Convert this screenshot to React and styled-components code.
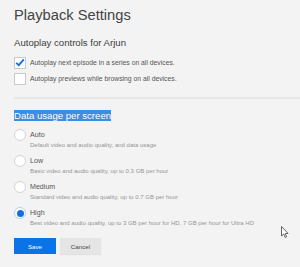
import React from "react";
import styled, { createGlobalStyle } from "styled-components";

const Global = createGlobalStyle`
  html, body { margin: 0; padding: 0; background: #f3f3f3; }
  body { font-family: "Liberation Sans", Arial, sans-serif; }
`;

const Page = styled.div`
  position: relative;
  width: 300px;
  height: 267px;
  background: #f3f3f3;
  padding-top: 7px;
  box-sizing: border-box;
  overflow: hidden;
`;

const Section = styled.section`
  padding-left: 14px;
  display: flex;
  flex-direction: column;
`;

const Title = styled.h1`
  margin: 0;
  font-size: 14.7px;
  line-height: 17px;
  font-weight: 400;
  color: #444;
`;

const SubTitle = styled.h2`
  margin: ${(p) => p.$mt}px 0 0;
  font-size: 9.6px;
  line-height: 12px;
  font-weight: 400;
  color: #3c3c3c;
`;

const CheckList = styled.div`
  margin-top: 5.5px;
  display: flex;
  flex-direction: column;
`;

const CheckRow = styled.label`
  display: flex;
  align-items: center;
  gap: 4px;
  height: 16px;
`;

const Box = styled.span`
  width: 12px;
  height: 12px;
  box-sizing: border-box;
  border: 1px solid #cacaca;
  background: #fff;
  display: flex;
  align-items: center;
  justify-content: center;
  flex-shrink: 0;
`;

const SmallLabel = styled.span`
  font-size: 6.8px;
  line-height: 8px;
  color: #555;
  white-space: nowrap;
`;

const Divider = styled.hr`
  margin: 10.5px 0 0 14px;
  border: 0;
  height: 2px;
  background: #e7e7e7;
`;

const Heading = styled.div`
  margin-top: 11px;
  font-size: 9.6px;
  line-height: 11px;
  height: 11px;
`;

const Selected = styled.span`
  background: #3a8ee6;
  color: #fff;
`;

const RadioList = styled.div`
  margin-top: 8px;
  display: flex;
  flex-direction: column;
  gap: 6px;
`;

const RadioGroup = styled.div`
  display: grid;
  grid-template-columns: 12px auto;
  column-gap: 4px;
  row-gap: 0;
  align-items: center;
`;

const Circle = styled.span`
  width: 12px;
  height: 12px;
  box-sizing: border-box;
  border-radius: 50%;
  border: 1px solid ${(p) => (p.$on ? "#b5d0ee" : "#d4d4d4")};
  background: #fff;
  display: flex;
  align-items: center;
  justify-content: center;
  &::after {
    content: "";
    display: ${(p) => (p.$on ? "block" : "none")};
    width: 7px;
    height: 7px;
    border-radius: 50%;
    background: #0f6fe0;
  }
`;

const RadioLabel = styled.span`
  font-size: 7.1px;
  line-height: 10px;
  color: #555;
`;

const Desc = styled.span`
  grid-column: 2;
  font-size: 6px;
  line-height: 8px;
  color: #959595;
  white-space: nowrap;
`;

const Buttons = styled.div`
  margin-top: 11px;
  display: flex;
  gap: 4px;
`;

const Button = styled.button`
  height: 16px;
  width: ${(p) => p.$w}px;
  border: 0;
  padding: 0;
  font-family: inherit;
  font-size: 6.2px;
  background: ${(p) => (p.$primary ? "#0a74e6" : "#e5e5e5")};
  color: ${(p) => (p.$primary ? "#fff" : "#444")};
  box-shadow: ${(p) => (p.$primary ? "none" : "0 1px 1px rgba(0,0,0,0.07)")};
`;

const Cursor = styled.svg`
  position: absolute;
  left: 281px;
  top: 226px;
`;

const checks = [
  { label: "Autoplay next episode in a series on all devices.", on: true },
  { label: "Autoplay previews while browsing on all devices.", on: false },
];

const options = [
  { label: "Auto", desc: "Default video and audio quality, and data usage" },
  { label: "Low", desc: "Basic video and audio quality, up to 0.3 GB per hour" },
  { label: "Medium", desc: "Standard video and audio quality, up to 0.7 GB per hour" },
  {
    label: "High",
    desc: "Best video and audio quality, up to 3 GB per hour for HD, 7 GB per hour for Ultra HD",
    on: true,
  },
];

export default function App() {
  return (
    <Page>
      <Global />
      <Section>
        <Title>Playback Settings</Title>
        <SubTitle $mt={13}>Autoplay controls for Arjun</SubTitle>
        <CheckList>
          {checks.map((c) => (
            <CheckRow key={c.label}>
              <Box>
                {c.on && (
                  <svg width="10" height="9" viewBox="0 0 10 9">
                    <path d="M1.2 4.8 L3.8 7.2 L8.8 1.4" fill="none" stroke="#0f6fe0" strokeWidth="1.8" />
                  </svg>
                )}
              </Box>
              <SmallLabel>{c.label}</SmallLabel>
            </CheckRow>
          ))}
        </CheckList>
      </Section>
      <Divider />
      <Section>
        <Heading>
          <Selected>Data usage per screen</Selected>
        </Heading>
        <RadioList>
          {options.map((o) => (
            <RadioGroup key={o.label}>
              <Circle $on={o.on} />
              <RadioLabel>{o.label}</RadioLabel>
              <Desc>{o.desc}</Desc>
            </RadioGroup>
          ))}
        </RadioList>
        <Buttons>
          <Button $primary $w={42}>Save</Button>
          <Button $w={41}>Cancel</Button>
        </Buttons>
      </Section>
      <Cursor width="8" height="13" viewBox="0 0 8 13">
        <path d="M0.5 0.5 L0.5 10 L2.7 8 L4.2 11.5 L5.6 10.9 L4.2 7.6 L7 7.4 Z" fill="#fff" stroke="#555" strokeWidth="0.9" />
      </Cursor>
    </Page>
  );
}
